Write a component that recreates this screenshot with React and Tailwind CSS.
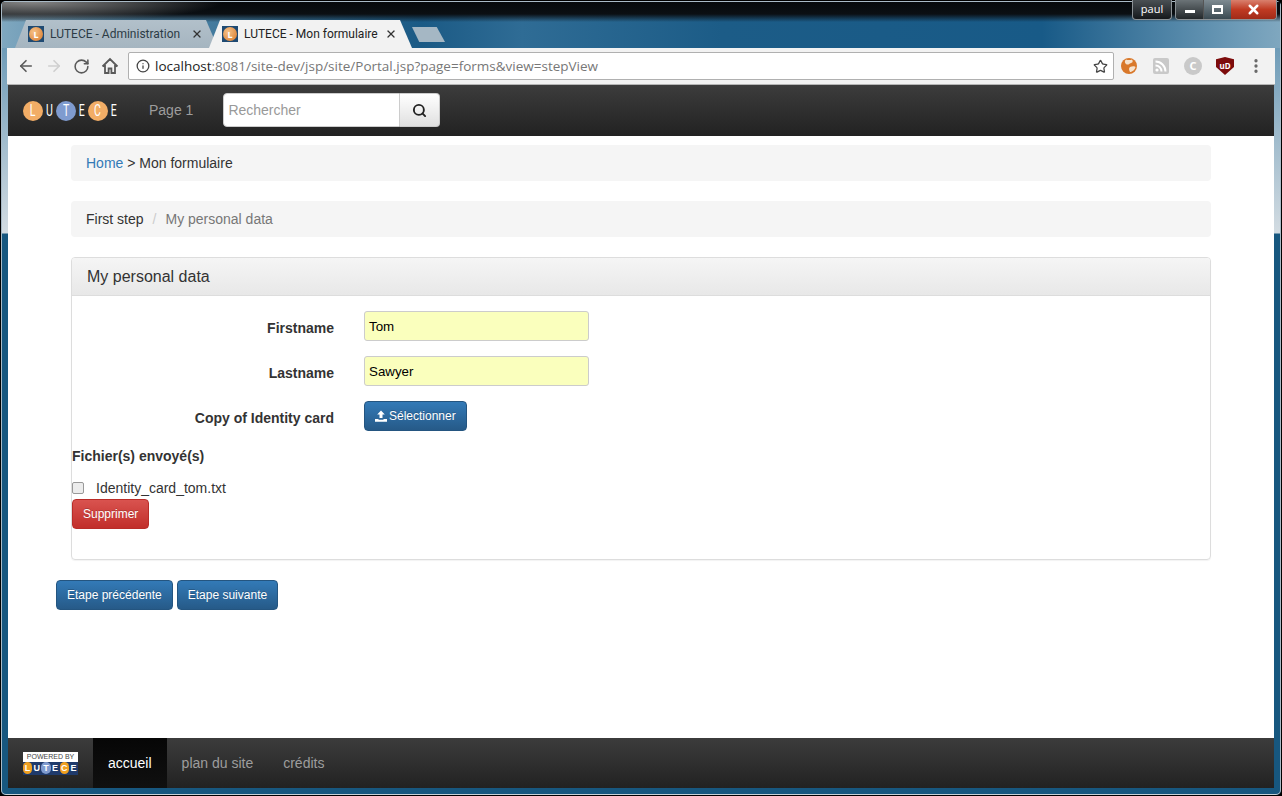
import React from "react";
import { ArrowLeft, ArrowRight, RotateCw, Star, Info, Search, X, EllipsisVertical } from "lucide-react";

const sans = "font-['Liberation_Sans',Arial,sans-serif]";
const blueBtn =
  "rounded-[4px] border border-[#245580] bg-[linear-gradient(to_bottom,#337ab7,#265a88)] text-white text-[12px] leading-[18px] h-[30px] px-[10px] [text-shadow:0_-1px_0_rgba(0,0,0,0.2)]";

const Favicon = () => (
  <div className="w-[16px] h-[16px] bg-[#1f4a72] flex items-center justify-center shrink-0">
    <div className="w-[14px] h-[14px] rounded-full bg-[radial-gradient(circle_at_35%_35%,#f6c186,#d9792a)] flex items-center justify-center text-white text-[9px] leading-none font-bold">
      L
    </div>
  </div>
);

const Tab = ({ label, active, className }) => (
  <div
    className={`${className} h-[28px] w-[203px] flex items-center pl-[13px] pr-[15px] [clip-path:polygon(0_100%,11px_0,calc(100%-12px)_0,100%_100%)] ${
      active ? "bg-[#f2f2f2] text-[#222]" : "bg-[linear-gradient(to_bottom,#b2c0ca,#a5b5c0)] text-[#2c3b46]"
    }`}
  >
    <Favicon />
    <span className="ml-[6px] flex-1 font-['Roboto',sans-serif] text-[12px] whitespace-nowrap">{label}</span>
    <X size={12} strokeWidth={2.6} className="text-[#333] shrink-0" />
  </div>
);

const TitleBar = () => (
  <div className="h-[20px] flex justify-end -mt-[2px] -mr-[2px]">
    <div className="h-[20px] w-[40px] mr-[3px] rounded-b-[4px] border border-t-0 border-[#8c9296] bg-[linear-gradient(to_bottom,#4a5054,#15181b)] flex items-center justify-center text-[11px] text-white font-['Open_Sans',sans-serif]">
      paul
    </div>
    <div className="h-[20px] w-[102px] flex rounded-b-[4px] border border-t-0 border-[#8c9296] overflow-hidden">
      <div className="w-[28px] bg-[linear-gradient(to_bottom,#6b7377,#23282b)] flex items-center justify-center border-r border-[#555]">
        <div className="w-[10px] h-[3px] mt-[4px] bg-white" />
      </div>
      <div className="w-[27px] bg-[linear-gradient(to_bottom,#7d8a91,#3b4a52)] flex items-center justify-center">
        <div className="w-[11px] h-[9px] border-2 border-t-[3px] border-white" />
      </div>
      <div className="flex-1 bg-[linear-gradient(to_bottom,#d9806d,#c03a22_50%,#a12b18)] flex items-center justify-center">
        <X size={15} strokeWidth={4} className="text-white" />
      </div>
    </div>
  </div>
);

const HomeIcon = () => (
  <svg width="18" height="18" viewBox="0 0 18 18" fill="none" stroke="#5a5a5a" strokeWidth="1.8">
    <path d="M1.5 9.5 9 2l7.5 7.5M4 8v8h3.6v-4.5h2.8V16H14V8" />
  </svg>
);

const Extensions = () => (
  <div className="flex items-center ml-[5px] gap-[14px] pl-[1px]">
    <svg width="18" height="18" viewBox="0 0 18 18">
      <circle cx="9" cy="9" r="8" fill="#d9782a" />
      <path d="M6 2.5c2 1 5 .5 6 0 1 1.500 1 3-1 3.500s-2 2-4 1.500S4 4 6 2.500zM10 10c2-1 5-1 5.500 0-.5 2.500-3 5-5.500 5-1-2-1.500-4 0-5z" fill="#f5e3cf" />
    </svg>
    <svg width="18" height="18" viewBox="0 0 18 18">
      <rect x="1" y="1" width="16" height="16" rx="2" fill="#c9c9c9" />
      <circle cx="5" cy="13" r="1.600" fill="#fff" />
      <path d="M3.500 8.500a6 6 0 0 1 6 6M3.500 4.500a10 10 0 0 1 10 10" stroke="#fff" strokeWidth="2" fill="none" />
    </svg>
    <div className="w-[18px] h-[18px] rounded-full bg-[#c9c9c9] text-white text-[11px] font-bold flex items-center justify-center">C</div>
    <div className="w-[18px] h-[18px] bg-[#7d0c0c] [clip-path:polygon(50%_0,100%_12%,100%_55%,50%_100%,0_55%,0_12%)] text-white text-[8px] leading-none font-bold flex items-center justify-center">
      uD
    </div>
  </div>
);

const Toolbar = () => (
  <div className="h-[37px] bg-[#f2f2f2] border-b border-[#b5b5b5] flex items-center pl-[10px] pr-[10px]">
    <ArrowLeft size={18} strokeWidth={2.2} className="text-[#5a5a5a]" />
    <ArrowRight size={18} strokeWidth={2.2} className="ml-[10px] text-[#cfcfcf]" />
    <RotateCw size={17} strokeWidth={2.2} className="ml-[10px] text-[#5a5a5a]" />
    <div className="ml-[11px]"><HomeIcon /></div>
    <div className="ml-[9px] flex-1 h-[28px] bg-white border border-[#b0b0b0] rounded-[2px] flex items-center pl-[7px] pr-[5px]">
      <Info size={14} strokeWidth={2.2} className="text-[#444] shrink-0" />
      <span className="ml-[5px] flex-1 font-['Open_Sans',sans-serif] text-[13.5px] text-[#777] whitespace-nowrap">
        <span className="text-[#222]">localhost</span>:8081/site-dev/jsp/site/Portal.jsp?page=forms&amp;view=stepView
      </span>
      <Star size={15} strokeWidth={2} className="text-[#444]" />
    </div>
    <div className="flex items-center">
      <Extensions />
      <EllipsisVertical size={18} strokeWidth={2.4} className="ml-[13px] text-[#666]" />
    </div>
  </div>
);

const Logo = () => {
  const letters = [
    ["L", "w-[20px] bg-[#f2ad66]"],
    ["U", "w-[13px]"],
    ["T", "w-[20px] bg-[#7f9bcf]"],
    ["E", "w-[12px]"],
    ["C", "w-[20px] bg-[#f2ad66]"],
    ["E", "w-[11px]"],
  ];
  return (
    <div className="flex items-center">
      {letters.map(([l, c], i) => (
        <div key={i} className={`${c} h-[20px] rounded-full flex items-center justify-center text-[17px] leading-none text-white font-['Roboto',sans-serif]`}>
          <span className="inline-block [transform:scaleX(0.62)]">{l}</span>
        </div>
      ))}
    </div>
  );
};

const Navbar = () => (
  <div className={`h-[51px] mx-[1px] bg-[linear-gradient(to_bottom,#3c3c3c,#222)] flex items-center pl-[15px] ${sans}`}>
    <Logo />
    <span className="ml-[30px] text-[14px] text-[#9d9d9d]">Page 1</span>
    <div className="ml-[30px] -mt-[1px] flex h-[34px]">
      <div className="w-[177px] bg-white rounded-l-[4px] border border-[#ccc] flex items-center pl-[4px] text-[14px] text-[#999]">Rechercher</div>
      <div className="w-[40px] rounded-r-[4px] border border-l-0 border-[#ccc] bg-[linear-gradient(to_bottom,#fff,#e0e0e0)] flex items-center justify-center">
        <Search size={15} strokeWidth={3} className="text-[#222]" />
      </div>
    </div>
  </div>
);

const UploadIcon = () => (
  <svg width="12" height="12" viewBox="0 0 12 12" fill="#fff">
    <path d="M6 .5 9.800 4.500H7.500V8h-3V4.500H2.200zM0 9h3.500v.8h5V9H12v2.700H0z" />
  </svg>
);

const Field = ({ label, value }) => (
  <div className="flex items-center h-[30px] mb-[15px]">
    <label className="w-[262px] text-right font-bold mt-[3px]">{label}</label>
    <div className="ml-[30px] w-[225px] h-[30px] rounded-[3px] border border-[#ccc] bg-[#faffbd] flex items-center px-[4px] pt-[1px] text-[13.33px] text-black">{value}</div>
  </div>
);

const Panel = () => (
  <div className="border border-[#ddd] rounded-[4px] shadow-[0_1px_1px_rgba(0,0,0,0.05)]">
    <div className="h-[38px] bg-[linear-gradient(to_bottom,#f5f5f5,#e8e8e8)] border-b border-[#ddd] rounded-t-[3px] flex items-center pl-[15px] text-[16px]">
      My personal data
    </div>
    <div className="pt-[15px] pb-[30px]">
      <Field label="Firstname" value="Tom" />
      <Field label="Lastname" value="Sawyer" />
      <div className="flex items-center h-[30px] mb-[15px]">
        <label className="w-[262px] text-right font-bold mt-[3px]">Copy of Identity card</label>
        <button className={`ml-[30px] ${blueBtn} flex items-center gap-[2px]`}>
          <UploadIcon />
          Sélectionner
        </button>
      </div>
      <h4 className="font-bold leading-[20px]">Fichier(s) envoyé(s)</h4>
      <div className="flex items-center h-[20px] mt-[12px]">
        <div className="w-[12px] h-[12px] rounded-[2px] border border-[#999] bg-[#ececec]" />
        <span className="ml-[12px]">Identity_card_tom.txt</span>
      </div>
      <button className="mt-[1px] block h-[30px] px-[10px] rounded-[4px] border border-[#b92c28] bg-[linear-gradient(to_bottom,#d9534f,#c12e2a)] text-white text-[12px] [text-shadow:0_-1px_0_rgba(0,0,0,0.2)]">
        Supprimer
      </button>
    </div>
  </div>
);

const Main = () => (
  <main className={`flex-1 bg-white mx-[1px] px-[48px] pt-[9px] text-[14px] leading-[20px] text-[#333] ${sans}`}>
    <div className="px-[15px]">
      <div className="h-[36px] rounded-[4px] bg-[#f5f5f5] flex items-center px-[15px]">
        <a className="text-[#337ab7]">Home</a>
        <span className="whitespace-pre"> &gt; Mon formulaire</span>
      </div>
      <div className="mt-[20px] h-[36px] rounded-[4px] bg-[#f5f5f5] flex items-center px-[15px]">
        <span>First step</span>
        <span className="px-[9px] text-[#ccc]">/</span>
        <span className="text-[#777]">My personal data</span>
      </div>
      <div className="mt-[20px]">
        <Panel />
      </div>
    </div>
    <div className="mt-[20px] flex gap-[4px]">
      <button className={blueBtn}>Etape précédente</button>
      <button className={blueBtn}>Etape suivante</button>
    </div>
  </main>
);

const FooterLogo = () => (
  <div className="w-[55px] h-[23px] flex flex-col">
    <div className="h-[10px] bg-white text-[#444] text-[7px] leading-[10px] text-center whitespace-nowrap">POWERED BY</div>
    <div className="flex-1 bg-[#1f3a6b] flex items-center justify-between text-white text-[9px] leading-none font-bold">
      {["L", "U", "T", "E", "C", "E"].map((l, i) => (
        <span key={i} className={`w-[10px] h-[12px] rounded-full text-center leading-[12px] ${i === 0 || i === 4 ? "bg-[#f0a020]" : i === 2 ? "bg-[#7f9bcf]" : ""}`}>
          {l}
        </span>
      ))}
    </div>
  </div>
);

const Footer = () => (
  <footer className={`h-[50px] mx-[1px] bg-[linear-gradient(to_bottom,#3c3c3c,#222)] flex items-stretch pl-[15px] text-[14px] text-[#9d9d9d] ${sans}`}>
    <div className="flex items-center"><FooterLogo /></div>
    <a className="ml-[15px] px-[15px] bg-[linear-gradient(to_bottom,#060606,#101010)] text-white flex items-center">accueil</a>
    <a className="px-[15px] flex items-center">plan du site</a>
    <a className="px-[15px] flex items-center">crédits</a>
  </footer>
);

export default function App() {
  return (
    <div className="w-[1282px] h-[796px] bg-black">
      <div className="h-full rounded-[6px] border border-black bg-[linear-gradient(to_bottom,#6f9cb8_0,#6f9cb8_48px,#d3dce2_232px,#17577f_233px,#17577f_100%)]">
        <div className="h-full rounded-[5px] border border-[#a9bac6] border-b-[#c8d2d8] px-[5px] pb-[6px] flex flex-col">
          <div className="h-[46px] -mx-[5px] px-[5px] bg-[radial-gradient(190px_20px_at_30px_0,#858585,transparent),linear-gradient(to_bottom,#06090c_0,#0b0f13_12px,rgba(10,15,20,0)_20px),linear-gradient(to_right,#7fa7bf_0,#5a8dac_90px,#1b5a85_420px,#2f6c95_520px,#1c5c87_720px,#185a87_1040px,#6f9cb8_1240px,#7fa7bf_100%)]">
            <TitleBar />
            <div className="flex items-end h-[28px] pl-[8px]">
              <Tab label="LUTECE - Administration" />
              <Tab label="LUTECE - Mon formulaire" active className="-ml-[9px]" />
              <div className="mb-[6px] w-[33px] h-[15px] bg-[#a5b7c4] [clip-path:polygon(0_0,75%_0,100%_100%,22%_100%)]" />
            </div>
          </div>
          <Toolbar />
          <Navbar />
          <Main />
          <Footer />
        </div>
      </div>
    </div>
  );
}
